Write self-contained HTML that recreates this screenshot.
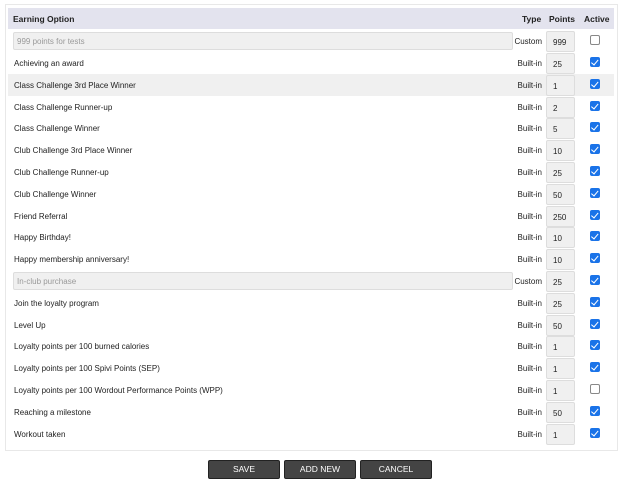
<!DOCTYPE html><html><head><style>
body{margin:0;width:624px;height:485px;background:#fff;font-family:"Liberation Sans",sans-serif;font-size:8px;color:#222;position:relative;overflow:hidden}
.panel{position:absolute;left:5px;top:4px;width:611px;height:445px;border:1px solid #e8e8e8}
.hdr{position:absolute;left:8px;top:8px;width:606px;height:21px;background:#e3e3ee;font-weight:bold;font-size:8.5px}
.hdr span{position:absolute;top:6px}
.r{position:absolute;left:8px;width:606px;height:22px}
.r.g{background:#f0f0f0}
.n{position:absolute;left:6px;top:7px}
.in{position:absolute;left:5px;top:2px;width:498px;height:16px;border:1px solid #ddd;border-radius:2px;background:#f0f0f0;color:#999}
.in span{position:absolute;left:3px;top:4px}
.t{position:absolute;right:72px;top:7px}
.p{position:absolute;left:538px;top:1px;width:27px;height:19px;border:1px solid #ddd;border-radius:2px;background:#f0f0f0}
.p span{position:absolute;left:6px;top:6px}
.c{position:absolute;left:582px;top:5px;width:10px;height:10px;border-radius:2px;background:#1a73e8}
.c:after{content:"";position:absolute;left:3px;top:1px;width:2.5px;height:5.5px;border:solid #fff;border-width:0 1.5px 1.5px 0;transform:rotate(40deg)}
.c.o{background:#fff;border:1px solid #888;width:8px;height:8px}
.c.o:after{display:none}
.b{position:absolute;top:460px;height:17px;background:#444;border:1px solid #222;border-radius:2px;color:#fff;font-size:8.5px;text-align:center;line-height:17px}
</style></head><body>
<div class="panel"></div>
<div class="hdr"><span style="left:5px">Earning Option</span><span style="left:514px">Type</span><span style="left:541px">Points</span><span style="left:576px">Active</span></div>
<div class="r" style="top:30px"><div class="in"><span>999 points for tests</span></div><span class="t">Custom</span><div class="p"><span>999</span></div><div class="c o"></div></div>
<div class="r" style="top:52px"><span class="n">Achieving an award</span><span class="t">Built-in</span><div class="p"><span>25</span></div><div class="c"></div></div>
<div class="r g" style="top:74px"><span class="n">Class Challenge 3rd Place Winner</span><span class="t">Built-in</span><div class="p"><span>1</span></div><div class="c"></div></div>
<div class="r" style="top:96px"><span class="n">Class Challenge Runner-up</span><span class="t">Built-in</span><div class="p"><span>2</span></div><div class="c"></div></div>
<div class="r" style="top:117px"><span class="n">Class Challenge Winner</span><span class="t">Built-in</span><div class="p"><span>5</span></div><div class="c"></div></div>
<div class="r" style="top:139px"><span class="n">Club Challenge 3rd Place Winner</span><span class="t">Built-in</span><div class="p"><span>10</span></div><div class="c"></div></div>
<div class="r" style="top:161px"><span class="n">Club Challenge Runner-up</span><span class="t">Built-in</span><div class="p"><span>25</span></div><div class="c"></div></div>
<div class="r" style="top:183px"><span class="n">Club Challenge Winner</span><span class="t">Built-in</span><div class="p"><span>50</span></div><div class="c"></div></div>
<div class="r" style="top:205px"><span class="n">Friend Referral</span><span class="t">Built-in</span><div class="p"><span>250</span></div><div class="c"></div></div>
<div class="r" style="top:226px"><span class="n">Happy Birthday!</span><span class="t">Built-in</span><div class="p"><span>10</span></div><div class="c"></div></div>
<div class="r" style="top:248px"><span class="n">Happy membership anniversary!</span><span class="t">Built-in</span><div class="p"><span>10</span></div><div class="c"></div></div>
<div class="r" style="top:270px"><div class="in"><span>In-club purchase</span></div><span class="t">Custom</span><div class="p"><span>25</span></div><div class="c"></div></div>
<div class="r" style="top:292px"><span class="n">Join the loyalty program</span><span class="t">Built-in</span><div class="p"><span>25</span></div><div class="c"></div></div>
<div class="r" style="top:314px"><span class="n">Level Up</span><span class="t">Built-in</span><div class="p"><span>50</span></div><div class="c"></div></div>
<div class="r" style="top:335px"><span class="n">Loyalty points per 100 burned calories</span><span class="t">Built-in</span><div class="p"><span>1</span></div><div class="c"></div></div>
<div class="r" style="top:357px"><span class="n">Loyalty points per 100 Spivi Points (SEP)</span><span class="t">Built-in</span><div class="p"><span>1</span></div><div class="c"></div></div>
<div class="r" style="top:379px"><span class="n">Loyalty points per 100 Wordout Performance Points (WPP)</span><span class="t">Built-in</span><div class="p"><span>1</span></div><div class="c o"></div></div>
<div class="r" style="top:401px"><span class="n">Reaching a milestone</span><span class="t">Built-in</span><div class="p"><span>50</span></div><div class="c"></div></div>
<div class="r" style="top:423px"><span class="n">Workout taken</span><span class="t">Built-in</span><div class="p"><span>1</span></div><div class="c"></div></div>
<div class="b" style="left:208px;width:70px">SAVE</div>
<div class="b" style="left:284px;width:70px">ADD NEW</div>
<div class="b" style="left:360px;width:70px">CANCEL</div>
</body></html>
